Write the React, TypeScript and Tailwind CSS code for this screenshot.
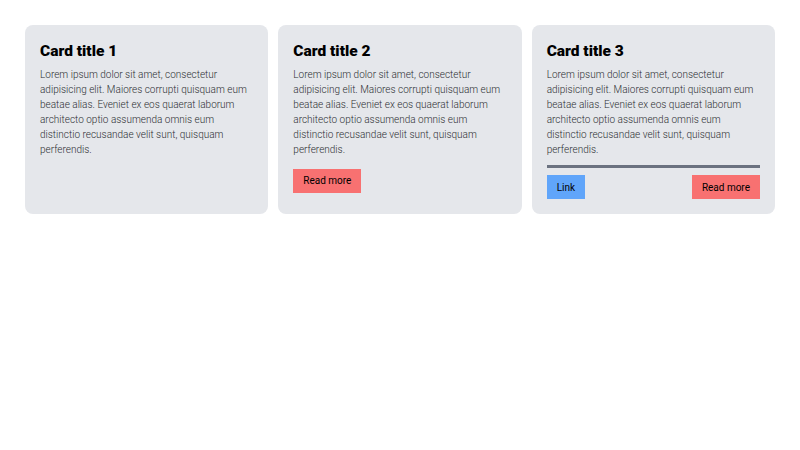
import React from 'react';

const LOREM =
  'Lorem ipsum dolor sit amet, consectetur adipisicing elit. Maiores corrupti quisquam eum beatae alias. Eveniet ex eos quaerat laborum architecto optio assumenda omnis eum distinctio recusandae velit sunt, quisquam perferendis.';

interface CardProps {
  title: string;
  children?: React.ReactNode;
}

const Card: React.FC<CardProps> = ({ title, children }) => (
  <div className="flex flex-col rounded-lg bg-[#e5e7eb] p-[15px]">
    <h2 className="text-[15.5px] font-black leading-[22px] text-black">{title}</h2>
    <p className="mt-[5px] text-[10px] font-light leading-[15px] text-[#2d2f33]">{LOREM}</p>
    {children}
  </div>
);

const Button: React.FC<{ color: string; children: React.ReactNode }> = ({ color, children }) => (
  <button className={`h-6 px-[10px] text-[10px] text-black ${color}`}>{children}</button>
);

export default function App() {
  return (
    <div className="min-h-screen bg-white p-[25px]" style={{ fontFamily: 'Roboto, sans-serif' }}>
      <div className="grid grid-cols-3 items-stretch gap-[10px]">
        <Card title="Card title 1" />
        <Card title="Card title 2">
          <div className="mt-[10px]">
            <Button color="bg-[#f87171]">Read more</Button>
          </div>
        </Card>
        <Card title="Card title 3">
          <hr className="mt-[8px] border-t-[3px] border-[#6b7280]" />
          <div className="mt-[7px] flex items-center justify-between">
            <Button color="bg-[#60a5fa]">Link</Button>
            <Button color="bg-[#f87171]">Read more</Button>
          </div>
        </Card>
      </div>
    </div>
  );
}
